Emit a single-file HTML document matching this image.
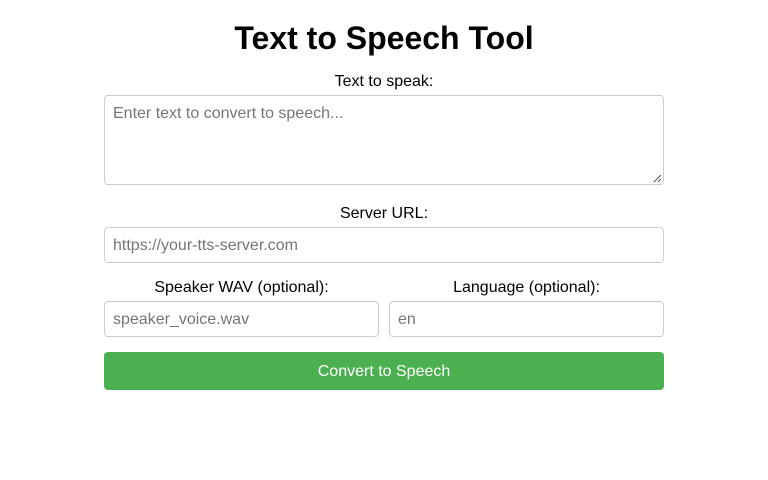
<!DOCTYPE html>
<html><head><style>
body{margin:0;background:#fff;font-family:"Liberation Sans",sans-serif;width:768px;height:480px;overflow:hidden}
h1{position:absolute;top:19px;left:0;width:768px;text-align:center;margin:0;font-size:32px;font-weight:bold;line-height:38px}
.l{position:absolute;font-size:16px;text-align:center;line-height:18px}
.b{position:absolute;box-sizing:border-box;border:1px solid #ccc;border-radius:4px;background:#fff;color:#757575;font-size:16px;padding:1px 8px 0;line-height:34px}
.btn{position:absolute;left:104px;top:352px;width:560px;height:38px;background:#4caf50;color:#fff;border-radius:4px;text-align:center;line-height:40px;font-size:16px}
</style></head><body>
<h1>Text to Speech Tool</h1>
<div class="l" style="left:104px;width:560px;top:73px">Text to speak:</div>
<div class="b" style="left:104px;top:95px;width:560px;height:90px">Enter text to convert to speech...
<svg style="position:absolute;right:1px;bottom:1px" width="9" height="9"><path d="M1 8L8 1M5 8L8 5" stroke="#555" stroke-width="1"/></svg></div>
<div class="l" style="left:104px;width:560px;top:205px">Server URL:</div>
<div class="b" style="left:104px;top:227px;width:560px;height:36px">https://your-tts-server.com</div>
<div class="l" style="left:104px;width:275px;top:279px">Speaker WAV (optional):</div>
<div class="l" style="left:389px;width:275px;top:279px">Language (optional):</div>
<div class="b" style="left:104px;top:301px;width:275px;height:36px">speaker_voice.wav</div>
<div class="b" style="left:389px;top:301px;width:275px;height:36px">en</div>
<div class="btn">Convert to Speech</div>
</body></html>
